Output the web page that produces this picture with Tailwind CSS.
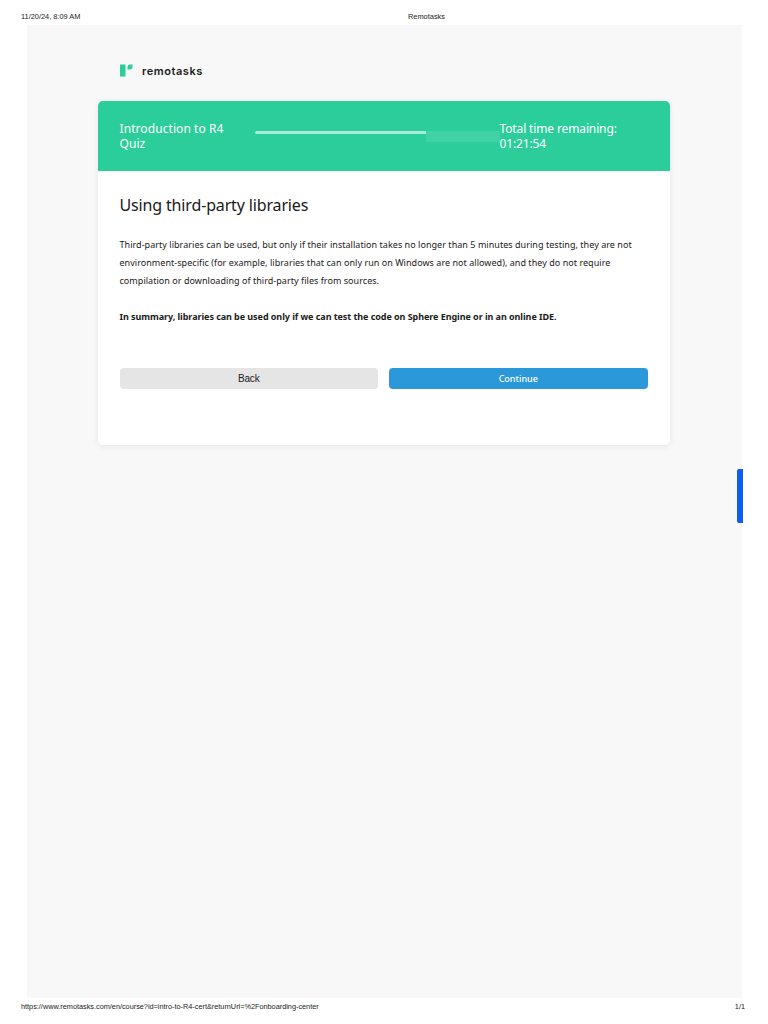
<!DOCTYPE html>
<html lang="en">
<head>
    <meta charset="UTF-8">
    <meta name="viewport" content="width=device-width, initial-scale=1.0">
    <title>Remotasks</title>
    <script src="https://cdn.jsdelivr.net/npm/@tailwindcss/browser@4"></script>
</head>
<body class="bg-white w-[768px] h-[1024px] overflow-hidden font-['Noto_Sans',sans-serif]">
    <!-- Print header -->
    <div class="h-[25px] pl-[21px] pt-[12px] flex font-['Liberation_Sans',sans-serif] text-[7.4px] leading-[9px] text-[#222]">
        <span class="w-[387px]">11/20/24, 8:09 AM</span>
        <span>Remotasks</span>
    </div>

    <!-- Page -->
    <div class="relative ml-[26.5px] w-[715px] h-[973px] bg-[#f8f8f8] pt-[39px] pl-[71.5px]">
        <!-- Logo -->
        <div class="flex items-center h-[13px] ml-[22px]">
            <svg width="13" height="13" viewBox="0 0 13 13" class="shrink-0">
                <rect x="0" y="0.5" width="5.5" height="12" fill="#2bcd9a"/>
                <path d="M7.5 5.5 L7.5 3 C7.5 1.5 8.5 0.5 10 0.5 L12.5 0.5 L12.5 3 C12.5 4.5 11.5 5.5 10 5.5 Z" fill="#2bcd9a"/>
            </svg>
            <span class="ml-[9px] mt-[2px] font-['Inter',sans-serif] font-semibold text-[11px] tracking-[0.55px] text-[#1a1a1a]">remotasks</span>
        </div>

        <!-- Card -->
        <div class="mt-[24px] w-[572px] h-[344px] bg-white rounded-[5px] shadow-[0_1px_6px_rgba(0,0,0,0.08)] overflow-hidden">
            <div class="h-[70px] bg-[#2bcd9a] flex items-start pl-[21.5px] pt-[19.5px] text-white text-[12px] leading-[15.5px]">
                <div class="w-[135px] tracking-[0.08px]">Introduction to R4<br>Quiz</div>
                <div class="w-[245px] flex items-start mt-[10px]">
                    <div class="w-[171px] h-[3px] bg-white/60 rounded-l-full"></div>
                    <div class="w-[74px] h-[11px] bg-white/10"></div>
                </div>
                <div class="tracking-[-0.13px]">Total time remaining:<br>01:21:54</div>
            </div>

            <div class="px-[21.5px] pt-[24px]">
                <h1 class="text-[16px] leading-[20px] tracking-[-0.15px] text-[#1a1a1a]">Using third-party libraries</h1>
                <div class="mt-[20.5px] text-[9px] leading-[18px] text-[#1a1a1a]">
                    <p class="tracking-[0.04px]">Third-party libraries can be used, but only if their installation takes no longer than 5 minutes during testing, they are not environment-specific (for example, libraries that can only run on Windows are not allowed), and they do not require compilation or downloading of third-party files from sources.</p>
                    <p class="mt-[18px] font-bold tracking-[-0.06px]">In summary, libraries can be used only if we can test the code on Sphere Engine or in an online IDE.</p>
                </div>
                <div class="mt-[42.5px] flex gap-[11px]">
                    <button class="w-[258.5px] h-[21px] rounded-[4px] bg-[#e5e5e5] text-[#222] font-['Liberation_Sans',sans-serif] text-[10px] tracking-[-0.2px]">Back</button>
                    <button class="w-[258.5px] h-[21px] rounded-[4px] bg-[#2b98da] text-white text-[9px] font-medium">Continue</button>
                </div>
            </div>
        </div>

        <!-- Feedback tab -->
        <div class="absolute left-[710px] top-[444px] w-[6px] h-[54px] rounded-l-[2px] bg-[#0f5cf0]"></div>
    </div>

    <!-- Print footer -->
    <div class="flex justify-between pl-[21px] pr-[23px] pt-[4px] font-['Liberation_Sans',sans-serif] text-[7.3px] leading-[9px] text-[#222]">
        <span>https://www.remotasks.com/en/course?id=intro-to-R4-cert&amp;returnUrl=%2Fonboarding-center</span>
        <span>1/1</span>
    </div>
</body>
</html>
